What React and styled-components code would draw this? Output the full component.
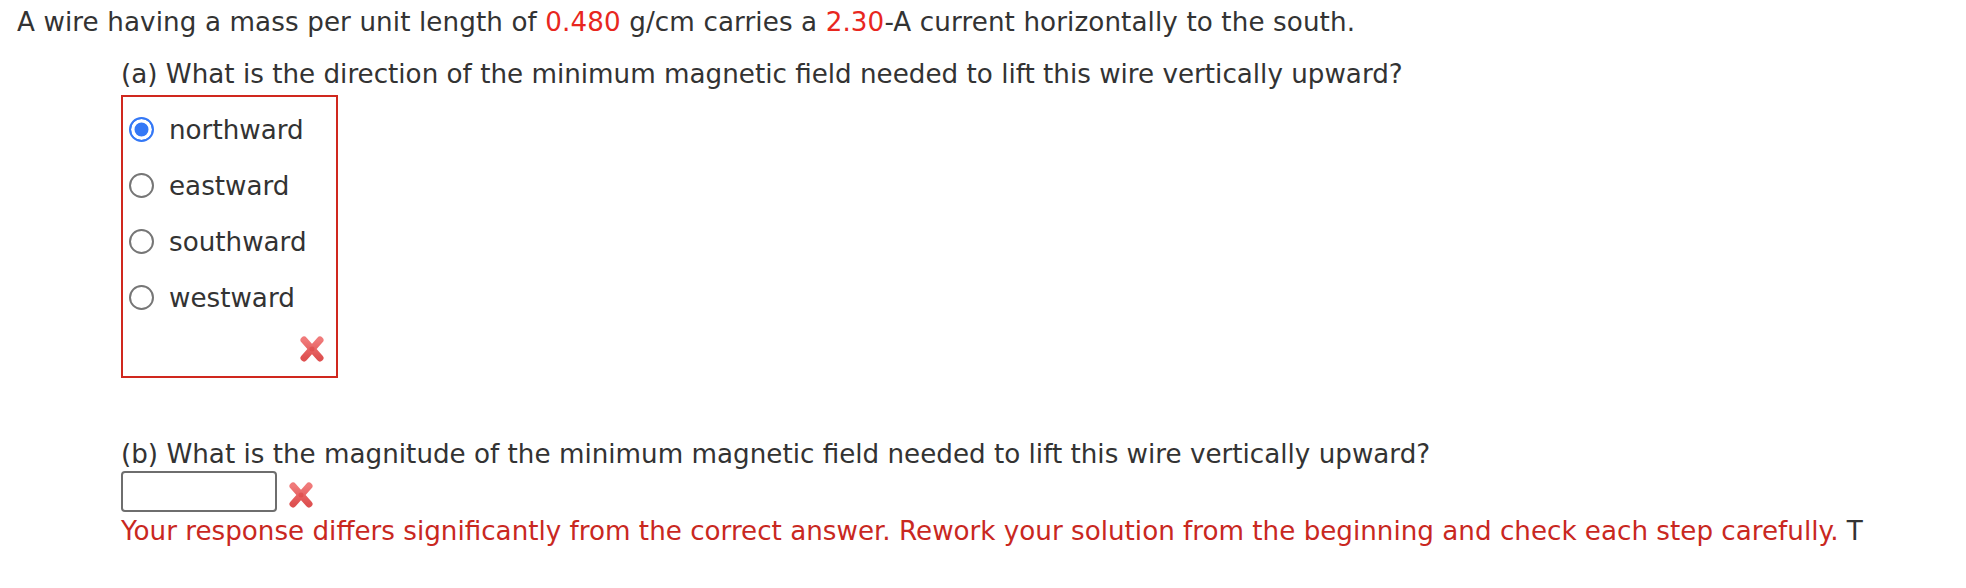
import React from "react";
import styled, { createGlobalStyle } from "styled-components";

const GlobalStyle = createGlobalStyle`
  body {
    margin: 0;
    background: #fff;
    color: #333;
    font-family: "DejaVu Sans", Verdana, sans-serif;
    font-size: 26.2px;
  }
`;

const choices = ["northward", "eastward", "southward", "westward"];

// red "incorrect" cross used next to graded answers
const WrongMark = ({ className }) => (
  <svg className={className} width="26" height="28" viewBox="0 0 26 28">
    <defs>
      <linearGradient id="xg" x1="0" y1="0" x2="0" y2="1">
        <stop offset="0" stopColor="#f07a7a" />
        <stop offset="1" stopColor="#de5050" />
      </linearGradient>
    </defs>
    <g stroke="url(#xg)" strokeWidth="7" strokeLinecap="round">
      <line x1="5" y1="5" x2="21" y2="23" />
      <line x1="21" y1="5" x2="5" y2="23" />
    </g>
    <circle cx="13" cy="14" r="2.5" fill="#d9413f" opacity="0.5" />
  </svg>
);

const App = () => {
  const selected = 0;
  return (
    <>
      <GlobalStyle />
      <Page>
        <Prompt>
          A wire having a mass per unit length of <Value>0.480</Value> g/cm
          carries a <Value>2.30</Value>-A current horizontally to the south.
        </Prompt>
        <Part>
          <PartTitle>
            (a) What is the direction of the minimum magnetic field needed to
            lift this wire vertically upward?
          </PartTitle>
          <ChoiceBox>
            {choices.map((c, i) => (
              <ChoiceRow key={c}>
                <Radio $checked={i === selected} />
                <span>{c}</span>
              </ChoiceRow>
            ))}
            <MarkRow>
              <WrongMark />
            </MarkRow>
          </ChoiceBox>

          <PartTitle $gap={61}>
            (b) What is the magnitude of the minimum magnetic field needed to
            lift this wire vertically upward?
          </PartTitle>
          <AnswerRow>
            <AnswerInput type="text" defaultValue="" />
            <InlineMark />
          </AnswerRow>
          <Feedback>
            <ErrorText>
              Your response differs significantly from the correct answer.
              Rework your solution from the beginning and check each step
              carefully.
            </ErrorText>{" "}
            T
          </Feedback>
        </Part>
      </Page>
    </>
  );
};

export default App;

const Page = styled.div`
  padding: 7px 0 0 17px;
  line-height: 31px;
`;

const Prompt = styled.p`
  margin: 0;
  white-space: nowrap;
  letter-spacing: 0.1px;
`;

const Value = styled.span`
  color: #e8271e;
`;

const Part = styled.div`
  padding-left: 104px;
`;

const PartTitle = styled.p`
  margin: ${({ $gap }) => $gap ?? 21}px 0 0;
  white-space: nowrap;
`;

const ChoiceBox = styled.div`
  margin-top: 5px;
  width: 217px;
  box-sizing: border-box;
  border: 2px solid #d0281e;
  padding: 18px 11px 13px 6px;
  display: flex;
  flex-direction: column;
  gap: 25px;
`;

const ChoiceRow = styled.label`
  display: flex;
  align-items: center;
  gap: 15px;
  white-space: nowrap;
`;

const Radio = styled.span`
  flex: none;
  width: 25px;
  height: 25px;
  box-sizing: border-box;
  border-radius: 50%;
  margin-top: -3px;
  border: 2px solid ${({ $checked }) => ($checked ? "#3478f6" : "#767676")};
  background: ${({ $checked }) => ($checked ? "#3478f6" : "#fff")};
  box-shadow: ${({ $checked }) => ($checked ? "inset 0 0 0 3.5px #fff" : "none")};
`;

const MarkRow = styled.div`
  display: flex;
  justify-content: flex-end;
  margin-top: -4px;
  line-height: 0;

  svg {
    filter: blur(0.3px);
  }
`;

const AnswerRow = styled.div`
  display: flex;
  align-items: center;
  gap: 11px;
  margin-top: 1px;
`;

const AnswerInput = styled.input`
  width: 156px;
  height: 41px;
  box-sizing: border-box;
  border: 2px solid #6e6e6e;
  border-radius: 4px;
  margin: 0;
  padding: 0 6px;
  font: inherit;
  background: #fff;
`;

const InlineMark = styled(WrongMark)`
  margin-top: 6px;
  filter: blur(0.3px);
`;

const Feedback = styled.p`
  margin: 4px 0 0;
  white-space: nowrap;
`;

const ErrorText = styled.span`
  color: #c9281f;
`;
